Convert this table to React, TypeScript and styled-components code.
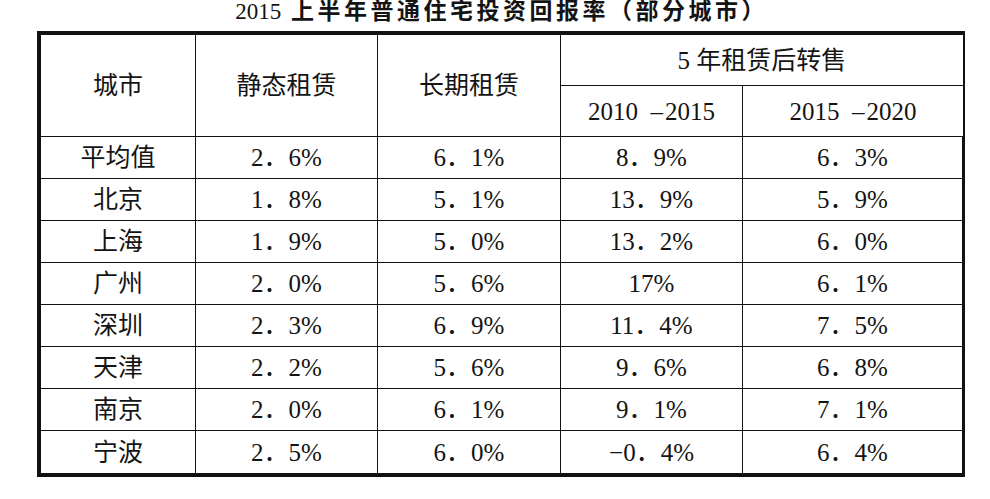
import styled, { createGlobalStyle } from 'styled-components';

const GlobalStyle = createGlobalStyle`
  html, body {
    margin: 0;
    padding: 0;
    background: #fff;
  }
  body {
    font-family: "Liberation Serif", "Noto Sans CJK SC", serif;
    color: #141414;
  }
`;

const rows = [
  ['平均值', '2．6%', '6．1%', '8．9%', '6．3%'],
  ['北京', '1．8%', '5．1%', '13．9%', '5．9%'],
  ['上海', '1．9%', '5．0%', '13．2%', '6．0%'],
  ['广州', '2．0%', '5．6%', '17%', '6．1%'],
  ['深圳', '2．3%', '6．9%', '11．4%', '7．5%'],
  ['天津', '2．2%', '5．6%', '9．6%', '6．8%'],
  ['南京', '2．0%', '6．1%', '9．1%', '7．1%'],
  ['宁波', '2．5%', '6．0%', '−0．4%', '6．4%']
];

const App: React.FC = () => {
  return (
    <>
      <GlobalStyle />
      <Page>
        <Title>
          <TitleYear>2015</TitleYear> <TitleText>上半年普通住宅投资回报率（部分城市）</TitleText>
        </Title>
        <Table>
          <Cell $rowSpan={2}>城市</Cell>
          <Cell $rowSpan={2}>静态租赁</Cell>
          <Cell $rowSpan={2}>长期租赁</Cell>
          <Cell $colSpan={2} $edge="head">
            5 年租赁后转售
          </Cell>
          <Cell>2010&ensp;–&#8202;2015</Cell>
          <Cell $edge="head">2015&ensp;–&#8202;2020</Cell>
          {rows.map((row, r) =>
            row.map((value, c) => (
              <Cell
                key={`${r}-${c}`}
                $edge={c === row.length - 1 ? 'body' : undefined}
                $last={r === rows.length - 1}
              >
                {value}
              </Cell>
            ))
          )}
        </Table>
      </Page>
    </>
  );
};

const Page = styled.div`
  width: 990px;
  height: 499px;
  padding-left: 37px;
  box-sizing: border-box;
  overflow: hidden;
`;

const Title = styled.div`
  width: 929px;
  height: 31px;
  line-height: 18px;
  text-align: center;
  font-size: 23px;
  white-space: nowrap;
`;

const TitleYear = styled.span`
  font-family: "Liberation Serif", serif;
`;

const TitleText = styled.span`
  margin-left: 4px;
  font-family: "Noto Sans CJK SC", sans-serif;
  font-weight: 700;
  letter-spacing: 3.5px;
`;

const Table = styled.div`
  display: grid;
  grid-template-columns: 155px 182px 183px 182px 222px;
  grid-template-rows: 51px 51px repeat(8, 42px);
  border-left: 4px solid #111;
  border-top: 4px solid #111;
  border-bottom: 4px solid #111;
  width: 928px;
  box-sizing: border-box;
`;

const Cell = styled.div<{
  $rowSpan?: number;
  $colSpan?: number;
  $edge?: 'head' | 'body';
  $last?: boolean;
}>`
  grid-row: span ${p => p.$rowSpan || 1};
  grid-column: span ${p => p.$colSpan || 1};
  display: flex;
  align-items: center;
  justify-content: center;
  box-sizing: border-box;
  border-right: ${p => (p.$edge === 'body' ? 3 : p.$edge === 'head' ? 2 : 1)}px
    solid #111;
  border-bottom: ${p => (p.$last ? 0 : 1)}px solid #111;
  font-size: 25px;
  line-height: 1;
  white-space: nowrap;
`;

export default App;
